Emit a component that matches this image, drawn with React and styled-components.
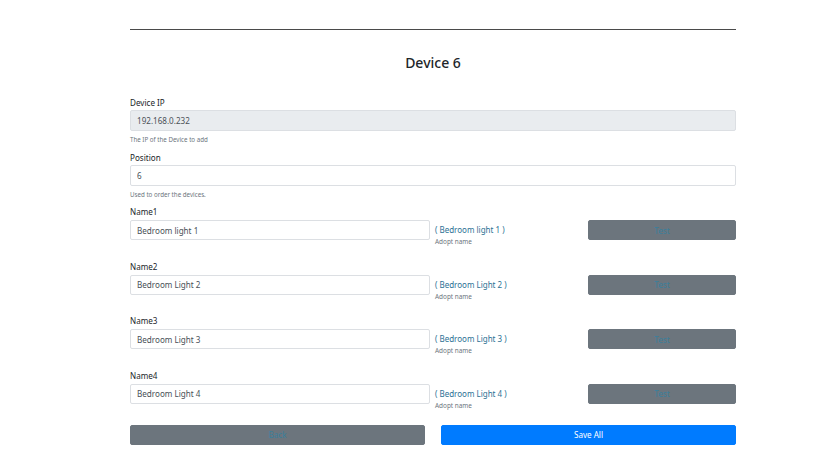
import React from 'react'
import styled, { createGlobalStyle } from 'styled-components'

const Global = createGlobalStyle`
  html, body {
    margin: 0;
    padding: 0;
    background: #fff;
  }
  body {
    font-family: "Noto Sans", "Open Sans", "Liberation Sans", sans-serif;
    color: #212529;
  }
`

const Page = styled.div`
  width: 606px;
  margin: 0 0 0 130px;
  padding-top: 29px;
`

const Rule = styled.hr`
  margin: 0;
  border: 0;
  border-top: 1px solid #4a4a4a;
`

const Title = styled.h2`
  margin: 23px 0 24px;
  text-align: center;
  font-size: 14px;
  font-weight: 500;
  line-height: 20px;
  color: #212529;
`

const Group = styled.div`
  margin-bottom: ${p => p.$mb ?? 8}px;
`

const Label = styled.label`
  display: block;
  font-size: 8.1px;
  line-height: 12px;
  margin-bottom: ${p => p.$mb ?? 1}px;
  color: #212529;
`

const Input = styled.input`
  display: block;
  box-sizing: border-box;
  width: 100%;
  height: ${p => p.$h || 21}px;
  padding: 0 6px;
  font: inherit;
  font-size: 8.1px;
  color: #495057;
  background: ${p => (p.disabled ? '#e9ecef' : '#fff')};
  border: 1px solid #dcdfe3;
  border-radius: 2px;
  outline: none;
`

const Help = styled.small`
  display: block;
  margin-top: 4px;
  font-size: 6.2px;
  line-height: 9px;
  color: #6c757d;
`

const Row = styled.div`
  display: grid;
  grid-template-columns: 300px 1fr 148px;
  column-gap: 5px;
  align-items: start;
  height: 26px;
`

const Adopt = styled.div`
  display: flex;
  flex-direction: column;
  padding-top: 4px;
`

const AdoptLink = styled.a`
  font-size: 8px;
  line-height: 12px;
  color: #2b7194;
  text-decoration: none;
  cursor: pointer;
`

const AdoptHint = styled.span`
  margin-top: 1px;
  font-size: 6.4px;
  line-height: 9px;
  color: #6c757d;
`

const Button = styled.button`
  display: block;
  box-sizing: border-box;
  width: 100%;
  height: 20px;
  padding: 0;
  border: 1px solid ${p => (p.$primary ? '#007bff' : '#6c757d')};
  border-radius: 2px;
  background: ${p => (p.$primary ? '#007bff' : '#6c757d')};
  color: ${p => (p.$primary ? '#fff' : '#3a7f9c')};
  font: inherit;
  font-size: 8.1px;
  cursor: pointer;
`

const Footer = styled.div`
  display: grid;
  grid-template-columns: 1fr 1fr;
  column-gap: 16px;
`

const names = [
  { label: 'Name1', value: 'Bedroom light 1', adopt: 'Bedroom light 1' },
  { label: 'Name2', value: 'Bedroom Light 2', adopt: 'Bedroom Light 2' },
  { label: 'Name3', value: 'Bedroom Light 3', adopt: 'Bedroom Light 3' },
  { label: 'Name4', value: 'Bedroom Light 4', adopt: 'Bedroom Light 4' },
]

export default function App() {
  return (
    <Page>
      <Global />
      <Rule />
      <Title>Device 6</Title>

      <Group>
        <Label>Device IP</Label>
        <Input disabled defaultValue="192.168.0.232" />
        <Help>The IP of the Device to add</Help>
      </Group>

      <Group $mb={7}>
        <Label>Position</Label>
        <Input defaultValue="6" />
        <Help>Used to order the devices.</Help>
      </Group>

      {names.map((n, i) => (
        <Group key={n.label} $mb={i === names.length - 1 ? 15 : 14.5}>
          <Label $mb={2}>{n.label}</Label>
          <Row>
            <Input $h={20} defaultValue={n.value} />
            <Adopt>
              <AdoptLink>( {n.adopt} )</AdoptLink>
              <AdoptHint>Adopt name</AdoptHint>
            </Adopt>
            <Button>Test</Button>
          </Row>
        </Group>
      ))}

      <Footer>
        <Button>Back</Button>
        <Button $primary>Save All</Button>
      </Footer>
    </Page>
  )
}
